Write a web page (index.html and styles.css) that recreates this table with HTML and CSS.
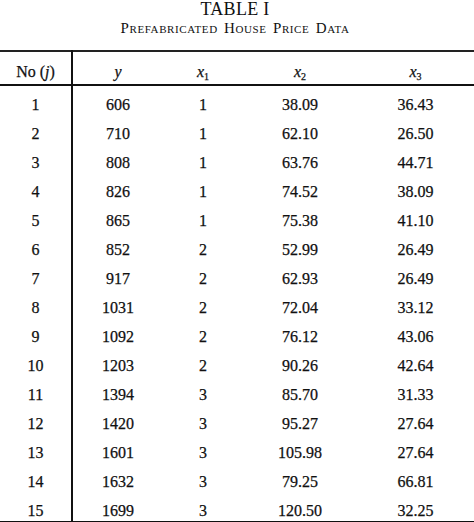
FILE: index.html
```html
<!DOCTYPE html>
<html>
<head>
<meta charset="utf-8">
<link rel="stylesheet" href="styles.css">
</head>
<body>
<div class="caption">
  <div class="cap-num">TABLE I</div>
  <div class="cap-title">Prefabricated House Price Data</div>
</div>
<table class="data">
  <colgroup>
    <col class="c1"><col class="c2"><col class="c3"><col class="c4"><col class="c5">
  </colgroup>
  <thead>
    <tr>
      <th class="first">No (<i>j</i>)</th>
      <th><i>y</i></th>
      <th><i>x</i><sub>1</sub></th>
      <th><i>x</i><sub>2</sub></th>
      <th><i>x</i><sub>3</sub></th>
    </tr>
  </thead>
  <tbody>
    <tr><td class="first">1</td><td>606</td><td>1</td><td>38.09</td><td>36.43</td></tr>
    <tr><td class="first">2</td><td>710</td><td>1</td><td>62.10</td><td>26.50</td></tr>
    <tr><td class="first">3</td><td>808</td><td>1</td><td>63.76</td><td>44.71</td></tr>
    <tr><td class="first">4</td><td>826</td><td>1</td><td>74.52</td><td>38.09</td></tr>
    <tr><td class="first">5</td><td>865</td><td>1</td><td>75.38</td><td>41.10</td></tr>
    <tr><td class="first">6</td><td>852</td><td>2</td><td>52.99</td><td>26.49</td></tr>
    <tr><td class="first">7</td><td>917</td><td>2</td><td>62.93</td><td>26.49</td></tr>
    <tr><td class="first">8</td><td>1031</td><td>2</td><td>72.04</td><td>33.12</td></tr>
    <tr><td class="first">9</td><td>1092</td><td>2</td><td>76.12</td><td>43.06</td></tr>
    <tr><td class="first">10</td><td>1203</td><td>2</td><td>90.26</td><td>42.64</td></tr>
    <tr><td class="first">11</td><td>1394</td><td>3</td><td>85.70</td><td>31.33</td></tr>
    <tr><td class="first">12</td><td>1420</td><td>3</td><td>95.27</td><td>27.64</td></tr>
    <tr><td class="first">13</td><td>1601</td><td>3</td><td>105.98</td><td>27.64</td></tr>
    <tr><td class="first">14</td><td>1632</td><td>3</td><td>79.25</td><td>66.81</td></tr>
    <tr><td class="first">15</td><td>1699</td><td>3</td><td>120.50</td><td>32.25</td></tr>
  </tbody>
</table>
</body>
</html>
```
FILE: styles.css
```css
html, body {
  margin: 0;
  padding: 0;
  background: #fff;
}
body {
  width: 474px;
  height: 522px;
  overflow: hidden;
  font-family: "Liberation Serif", "Times New Roman", serif;
  color: #111;
}
.caption {
  text-align: center;
  padding-right: 4px;
}
.cap-num {
  font-size: 18px;
  line-height: 18px;
  letter-spacing: 0.3px;
}
.cap-title {
  font-size: 15px;
  line-height: 20px;
  font-variant: small-caps;
  letter-spacing: 0.6px;
  word-spacing: 2px;
}
.data {
  margin-top: 12px;
  width: 474px;
  border-collapse: collapse;
  table-layout: fixed;
  font-size: 16px;
  -webkit-text-stroke: 0.25px #111;
}
.c1 { width: 72px; }
.c2 { width: 91px; }
.c3 { width: 80px; }
.c4 { width: 114px; }
.c5 { width: 117px; }
.data thead tr {
  border-top: 2px solid #222;
  border-bottom: 2px solid #111;
}
.data th {
  font-weight: normal;
  height: 32px;
  padding: 8px 0 0;
  line-height: 24px;
  box-sizing: border-box;
  text-align: center;
  vertical-align: top;
}
.data td {
  height: 29px;
  padding: 8px 0 0;
  line-height: 21px;
  box-sizing: border-box;
  text-align: center;
  vertical-align: top;
}
.data .first {
  border-right: 2px solid #111;
}
.data tbody tr:last-child {
  border-bottom: 2px solid #111;
}
.data sub {
  font-size: 10px;
  line-height: 0;
  vertical-align: -3px;
}
```
